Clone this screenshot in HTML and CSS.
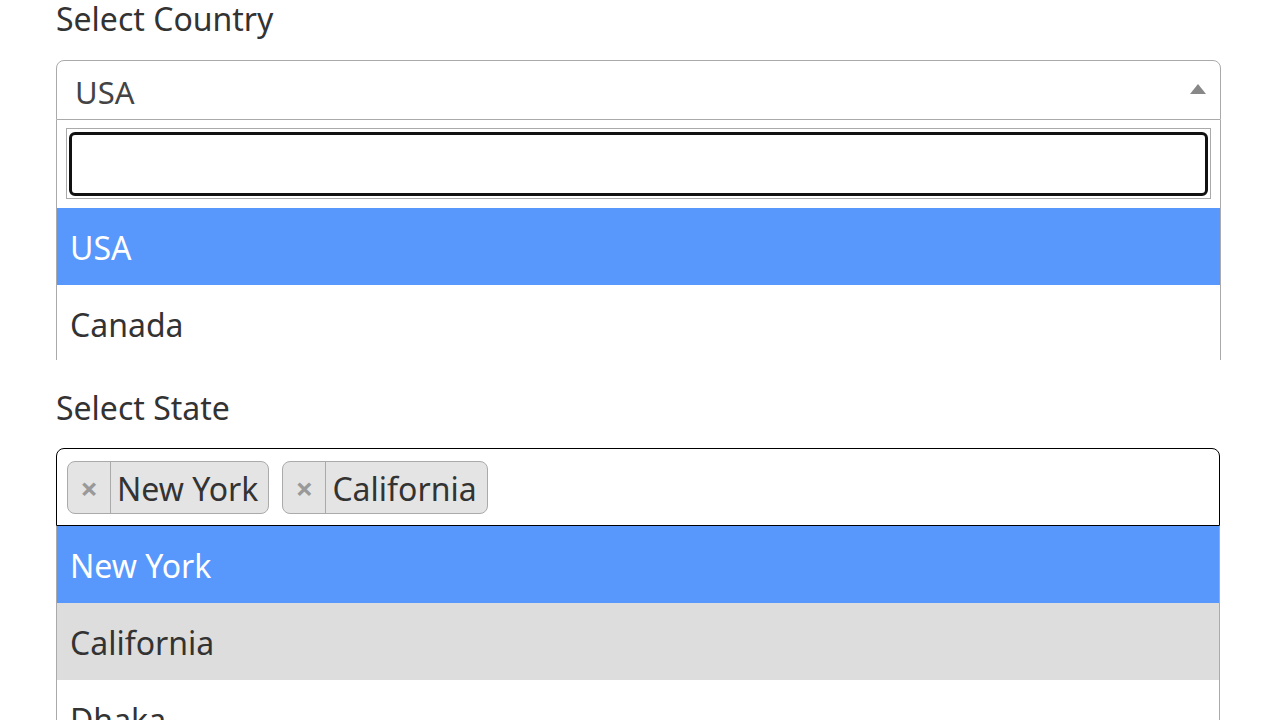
FILE: index.html
```html
<!DOCTYPE html>
<html lang="en">
<head>
  <meta charset="UTF-8" />
  <title>Select Country / State</title>
  <link rel="stylesheet" href="styles.css">
</head>
<body>
  <div class="page">
    <label class="field-label">Select Country</label>

    <div class="select single open">
      <span class="selected">USA</span>
      <span class="arrow"></span>
    </div>
    <div class="dropdown country-drop">
      <div class="search-wrap">
        <div class="search-box">
          <div class="search-field"></div>
        </div>
      </div>
      <ul class="options">
        <li class="highlighted">USA</li>
        <li>Canada</li>
      </ul>
    </div>

    <label class="field-label state-label">Select State</label>

    <div class="select multi">
      <span class="chip"><span class="chip-x">×</span><span class="chip-text">New York</span></span>
      <span class="chip"><span class="chip-x">×</span><span class="chip-text">California</span></span>
    </div>
    <div class="dropdown state-drop">
      <ul class="options">
        <li class="highlighted">New York</li>
        <li class="chosen">California</li>
        <li>Dhaka</li>
      </ul>
    </div>
  </div>
</body>
</html>
```

FILE: styles.css
```css
* {
  box-sizing: border-box;
}

body {
  margin: 0;
  background: #fff;
  font-family: "Noto Sans", "Open Sans", sans-serif;
  color: #333;
  overflow: hidden;
}

.page {
  padding: 0 59px 0 56px;
}

.field-label {
  display: block;
  font-size: 32px;
  line-height: 38px;
  color: #333;
  margin-bottom: 22px;
}

.state-label {
  margin-top: 29px;
  margin-bottom: 21px;
}

.select {
  display: flex;
  align-items: center;
  background: #fff;
  border-radius: 8px 8px 0 0;
}

.single {
  height: 60px;
  border: 1px solid #aaa;
  justify-content: space-between;
  padding: 4px 14px 0 18px;
}

.selected {
  font-size: 31px;
  line-height: 54px;
  color: #444;
}

.arrow {
  width: 0;
  height: 0;
  border-style: solid;
  border-width: 0 8.5px 10px 8.5px;
  border-color: transparent transparent #888 transparent;
  margin-bottom: 6px;
}

.multi {
  width: 1164px;
  height: 78px;
  border: 1px solid #000;
  gap: 13px;
  padding: 12px 10px 11px 10px;
  align-items: flex-start;
}

.chip {
  display: flex;
  height: 53px;
  background: #e4e4e4;
  border: 1px solid #aaa;
  border-radius: 8px;
  font-size: 32px;
  line-height: 49px;
  padding-top: 2px;
  color: #333;
}

.chip-x {
  width: 43px;
  margin-top: -2px;
  padding-top: 2px;
  text-align: center;
  border-right: 1px solid #aaa;
  color: #999;
  font-weight: bold;
  font-size: 31px;
}

.chip-text {
  padding: 0 10px 0 6px;
}

.dropdown {
  border-left: 1px solid #aaa;
  border-right: 1px solid #aaa;
  background: #fff;
  overflow: hidden;
}

.country-drop {
  height: 240px;
}

.state-drop {
  width: 1164px;
  height: 240px;
}

.search-wrap {
  padding: 8px 9px 9px 9px;
}

.search-box {
  border: 1px solid #aaa;
  padding: 3px 2px 2px 2px;
}

.search-field {
  height: 64px;
  border: 3px solid #111;
  border-radius: 6px;
  background: #fff;
}

.options {
  list-style: none;
  margin: 0;
  padding: 0;
}

.options li {
  height: 77px;
  line-height: 74px;
  padding: 3px 0 0 13px;
  font-size: 32px;
  color: #333;
}

.options li.highlighted {
  background: #5897fb;
  color: #fff;
}

.options li.chosen {
  background: #ddd;
}
```
